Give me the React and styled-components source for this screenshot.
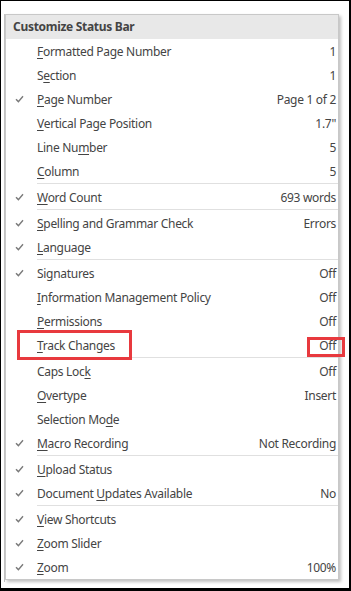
import React from 'react'
import styled, { createGlobalStyle } from 'styled-components'

const GlobalStyle = createGlobalStyle`
    html, body {
        margin: 0;
        padding: 0;
        background: #fff;
    }
`

const Frame = styled.div`
    position: relative;
    box-sizing: border-box;
    width: 351px;
    height: 591px;
    border-style: solid;
    border-color: #000;
    border-width: 1px 2px 3px 1px;
    background: #fff;
    overflow: hidden;
    display: flex;
    align-items: flex-start;
`

const PageEdge = styled.div`
    flex: none;
    width: 3px;
    height: 568px;
    margin-top: 13px;
    border-right: solid 1px #c4c4c4;
`

const Menu = styled.div`
    flex: none;
    box-sizing: border-box;
    width: 334px;
    margin-top: 13px;
    border: solid 1px #c8c8c8;
    background: #fff;
    box-shadow: 2px 2px 3px rgba(0, 0, 0, 0.25);
    font-family: "Noto Sans", "Open Sans", sans-serif;
    font-size: 12px;
    letter-spacing: -0.3px;
    color: #444;
`

const Header = styled.div`
    height: 24px;
    line-height: 24px;
    padding-left: 7px;
    background: #e8e8e8;
    font-weight: bold;
`

const Row = styled.div`
    display: flex;
    align-items: center;
    height: 24px;
    padding-right: 2px;
`

const CheckCell = styled.div`
    flex: none;
    width: 31px;
    display: flex;
    align-items: center;
    padding-left: 9px;
    box-sizing: border-box;
`

const Label = styled.span`
    flex: 1;
    white-space: nowrap;

    & u {
        text-decoration-thickness: 1px;
        text-underline-offset: 2px;
    }
`

const Value = styled.span`
    flex: none;
    white-space: nowrap;
`

const Separator = styled.div`
    height: 1px;
    margin: 0 0 1px 31px;
    background: #e0e0e0;
`

const Callout = styled.div`
    position: absolute;
    left: ${({x}) => x}px;
    top: ${({y}) => y}px;
    width: ${({w}) => w}px;
    height: ${({h}) => h}px;
    box-sizing: border-box;
    border: solid 3px #e8393e;
    pointer-events: none;
`

const Check = () => (
    <svg width="9" height="8" viewBox="0 0 9 8">
        <path d="M1 4.2 L3.4 6.6 L8 1.2" fill="none" stroke="#7a7a7a" strokeWidth="1.4" />
    </svg>
)

const items = [
    { label: 'Formatted Page Number', key: 0, value: '1' },
    { label: 'Section', key: 1, value: '1' },
    { label: 'Page Number', key: 0, value: 'Page 1 of 2', checked: true },
    { label: 'Vertical Page Position', key: 0, value: '1.7"' },
    { label: 'Line Number', key: 7, value: '5' },
    { label: 'Column', key: 0, value: '5' },
    'sep',
    { label: 'Word Count', key: 0, value: '693 words', checked: true },
    'sep',
    { label: 'Spelling and Grammar Check', key: 0, value: 'Errors', checked: true },
    { label: 'Language', key: 0, checked: true },
    'sep',
    { label: 'Signatures', key: 2, value: 'Off', checked: true },
    { label: 'Information Management Policy', key: 0, value: 'Off' },
    { label: 'Permissions', key: 0, value: 'Off' },
    { label: 'Track Changes', key: 0, value: 'Off' },
    'sep',
    { label: 'Caps Lock', key: 8, value: 'Off' },
    { label: 'Overtype', key: 0, value: 'Insert' },
    { label: 'Selection Mode', key: 12 },
    { label: 'Macro Recording', key: 0, value: 'Not Recording', checked: true },
    'sep',
    { label: 'Upload Status', key: 0, checked: true },
    { label: 'Document Updates Available', key: 9, value: 'No', checked: true },
    'sep',
    { label: 'View Shortcuts', key: 0, checked: true },
    { label: 'Zoom Slider', key: 0, checked: true },
    { label: 'Zoom', key: 0, value: '100%', checked: true },
]

const AccessLabel = ({ text, at }) => (
    <Label>
        {text.slice(0, at)}<u>{text[at]}</u>{text.slice(at + 1)}
    </Label>
)

const App = () => {
    return (
        <>
        <GlobalStyle />
        <Frame>
            <PageEdge />
            <Menu>
                <Header>Customize Status Bar</Header>
                {items.map((it, i) => it === 'sep' ? (
                    <Separator key={i} />
                ) : (
                    <Row key={i}>
                        <CheckCell>{it.checked && <Check />}</CheckCell>
                        <AccessLabel text={it.label} at={it.key} />
                        {it.value && <Value>{it.value}</Value>}
                    </Row>
                ))}
            </Menu>
            <Callout x={16} y={329} w={115} h={30} />
            <Callout x={306} y={336} w={38} h={20} />
        </Frame>
        </>
    )
}

export default App
